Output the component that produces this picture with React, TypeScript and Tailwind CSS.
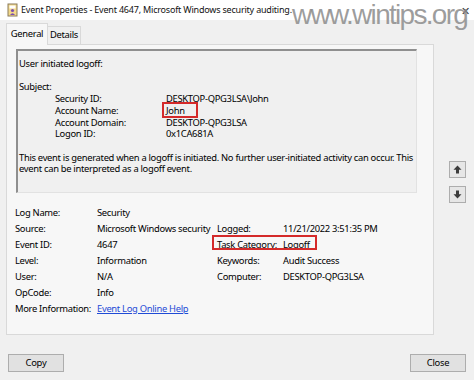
import React from 'react';

const FONT = { fontFamily: '"Segoe UI", "Noto Sans", Arial, sans-serif' };

const EventIcon = () => (
  <svg width="11" height="14" viewBox="0 0 11 14">
    <rect x="0.5" y="0.5" width="10" height="13" fill="#8a7a5a" />
    <rect x="1.5" y="1.5" width="8" height="11" fill="#f3d98a" />
    <rect x="2.5" y="2.5" width="6" height="3" fill="#ffffff" />
    <circle cx="5.5" cy="7.5" r="1.6" fill="#7b4fb0" />
    <path d="M3 12 Q5.5 8.5 8 12 Z" fill="#7b4fb0" />
  </svg>
);

const Arrow = ({ down = false }: { down?: boolean }) => (
  <svg width="9" height="9" viewBox="0 0 9 9" style={{ transform: down ? 'rotate(180deg)' : undefined }}>
    <path d="M4.5 0.5 L8.5 4.8 L6 4.8 L6 8.5 L3 8.5 L3 4.8 L0.5 4.8 Z" fill="#3c3c3c" />
  </svg>
);

const subject = [
  ['Security ID:', 'DESKTOP-QPG3LSA\\John'],
  ['Account Name:', 'John'],
  ['Account Domain:', 'DESKTOP-QPG3LSA'],
  ['Logon ID:', '0x1CA681A'],
];

const rows: [string, React.ReactNode, string?, string?][] = [
  ['Log Name:', 'Security'],
  ['Source:', 'Microsoft Windows security', 'Logged:', '11/21/2022 3:51:35 PM'],
  ['Event ID:', '4647', 'Task Category:', 'Logoff'],
  ['Level:', 'Information', 'Keywords:', 'Audit Success'],
  ['User:', 'N/A', 'Computer:', 'DESKTOP-QPG3LSA'],
  ['OpCode:', 'Info'],
  [
    'More Information:',
    <span className="text-[#1f4bd6] underline">Event Log Online Help</span>,
  ],
];

export default function App() {
  return (
    <div
      className="relative w-[474px] h-[380px] overflow-hidden bg-[#f0f0f0] text-black text-[9.4px] tracking-[-0.3px]"
      style={FONT}
    >
      {/* title bar */}
      <div className="h-[20px] bg-white flex items-center pl-[7px] pr-[4px]">
        <EventIcon />
        <span className="ml-[3px] text-[9px] tracking-[-0.2px] text-[#111]">
          Event Properties - Event 4647, Microsoft Windows security auditing.
        </span>
        <span className="ml-auto text-[11px] leading-none text-[#333] font-light">✕</span>
      </div>

      {/* watermark */}
      <div
        className="absolute left-[292px] top-[-2px] text-[28px] leading-[34px] tracking-[-1.7px] text-[#8c8c8c]/85"
        style={{ fontFamily: '"Liberation Sans", Arial, sans-serif' }}
      >
        www.wintips.org
      </div>

      <div className="flex pl-[6px] pt-[2px]">
        <div className="w-[428px]">
          {/* tabs */}
          <div className="flex items-end h-[22px]">
            <div className="relative z-10 -mb-px h-[22px] w-[42px] border border-b-0 border-[#d9d9d9] bg-[#f7f7f7] flex items-center justify-center">
              General
            </div>
            <div className="h-[18px] w-[33px] border border-l-0 border-[#d9d9d9] border-b-0 flex items-center justify-center">
              Details
            </div>
          </div>

          {/* tab page */}
          <div className="h-[291px] border border-[#d9d9d9] bg-[#f7f7f7] pt-[4px] pl-[9px]">
            <div className="w-[401px] h-[144px] border-t-2 border-l-2 border-t-[#8f8f8f] border-l-[#8f8f8f] border-b border-r border-b-[#e2e2e2] border-r-[#e2e2e2] bg-[#f0f0f0] pl-[1px] pt-[7px] leading-[11.7px]">
              <div>User initiated logoff:</div>
              <div className="h-[11.7px]" />
              <div>Subject:</div>
              {subject.map(([k, v]) => (
                <div key={k} className="flex">
                  <span className="ml-[36px] w-[111px]">{k}</span>
                  {k === 'Account Name:' ? (
                    <span className="relative">
                      {v}
                      <span className="absolute left-[-4px] top-[-3px] w-[36px] h-[16px] border-2 border-[#d42a2a]" />
                    </span>
                  ) : (
                    <span>{v}</span>
                  )}
                </div>
              ))}
              <div className="h-[11.7px]" />
              <div className="whitespace-nowrap">
                This event is generated when a logoff is initiated. No further user-initiated activity can occur. This
                <br />
                event can be interpreted as a logoff event.
              </div>
            </div>

            <div className="mt-[12px] -ml-[1px] grid grid-cols-[82px_120px_66px_1fr] auto-rows-[16px] items-center">
              {rows.map(([a, b, c, d], i) => (
                <React.Fragment key={i}>
                  <span>{a}</span>
                  <span className="whitespace-nowrap">{b}</span>
                  {c === 'Task Category:' ? (
                    <span className="relative whitespace-nowrap">
                      {c}
                      <span className="absolute left-[-5px] top-[-3px] w-[105px] h-[15px] border-2 border-[#d42a2a]" />
                    </span>
                  ) : (
                    <span>{c ?? ''}</span>
                  )}
                  <span>{d ?? ''}</span>
                </React.Fragment>
              ))}
            </div>
          </div>
        </div>

        {/* scroll buttons */}
        <div className="ml-[15px] pt-[139px] flex flex-col gap-[8px]">
          <div className="w-[17px] h-[17px] border border-[#adadad] bg-[#e6e6e6] flex items-center justify-center">
            <Arrow />
          </div>
          <div className="w-[17px] h-[17px] border border-[#adadad] bg-[#e6e6e6] flex items-center justify-center">
            <Arrow down />
          </div>
        </div>
      </div>

      {/* bottom buttons */}
      <div className="flex justify-between pl-[8px] pr-[8px] mt-[19px]">
        <button className="w-[56px] h-[18px] border border-[#adadad] bg-[#e1e1e1] flex items-center justify-center">
          Copy
        </button>
        <button className="w-[56px] h-[18px] border border-[#adadad] bg-[#e1e1e1] flex items-center justify-center">
          Close
        </button>
      </div>
    </div>
  );
}
